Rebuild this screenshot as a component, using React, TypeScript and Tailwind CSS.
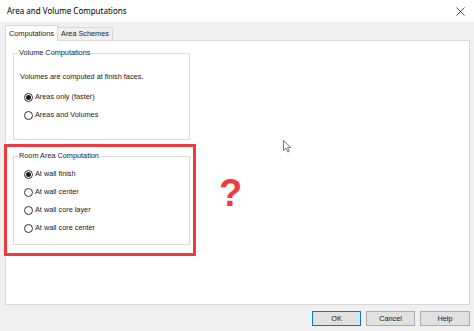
import React from "react";

function Radio({ label, checked }: { label: string; checked?: boolean }) {
  return (
    <div className="flex items-center h-[18px] pl-[10px]">
      <span className="w-[9px] h-[9px] rounded-full border border-[#333] bg-white flex items-center justify-center">
        {checked && <span className="w-[5px] h-[5px] rounded-full bg-[#1a1a1a]" />}
      </span>
      <span className="ml-[2px]">{label}</span>
    </div>
  );
}

export default function App() {
  return (
    <div className="w-[474px] h-[331px] bg-[#f0f0f0] flex flex-col overflow-hidden text-[#1a1a1a] font-['Liberation_Sans',Arial,sans-serif] text-[7.3px] leading-[10px]">
      {/* title bar */}
      <div className="h-[22px] bg-white flex items-center justify-between pl-[7px] pr-[9px]">
        <span className="font-['Noto_Sans',sans-serif] text-[8px] text-black">Area and Volume Computations</span>
        <svg width="9" height="9" viewBox="0 0 9 9" className="text-[#333]">
          <path d="M0.5 0.5 L8.5 8.5 M8.5 0.5 L0.5 8.5" stroke="currentColor" strokeWidth="0.9" />
        </svg>
      </div>

      <div className="flex-1 flex flex-col pl-[5px] pr-[4px] pt-[3px]">
        {/* tabs */}
        <div className="flex items-end h-[15px]">
          <div className="h-[16px] -mb-px z-10 bg-white border border-b-0 border-[#d9d9d9] px-[3px] flex items-center">
            Computations
          </div>
          <div className="h-[13px] bg-[#f0f0f0] border border-l-0 border-b-0 border-[#d9d9d9] px-[3px] flex items-center">
            Area Schemes
          </div>
        </div>

        {/* panel */}
        <div className="relative h-[265px] bg-white border border-[#d9d9d9] flex flex-col">
          <fieldset className="ml-[7px] mt-[7px] w-[177px] border border-[#dcdcdc] pb-[15px]">
            <legend className="ml-[4px] px-[1px]">Volume Computations</legend>
            <div className="pl-[6px] mt-[13px] h-[12px] flex items-center">Volumes are computed at finish faces.</div>
            <div className="mt-[5px]">
              <Radio label="Areas only (faster)" checked />
              <Radio label="Areas and Volumes" />
            </div>
          </fieldset>

          <div className="ml-[-2px] mt-[4px] w-[192px] border-[3px] border-[#ee3b41] pt-[4px] pb-[8px]">
            <fieldset className="ml-[6px] w-[177px] border border-[#dcdcdc] pb-[7px]">
              <legend className="ml-[4px] px-[1px]">Room Area Computation</legend>
              <div className="mt-[4px]">
                <Radio label="At wall finish" checked />
                <Radio label="At wall center" />
                <Radio label="At wall core layer" />
                <Radio label="At wall core center" />
              </div>
            </fieldset>
          </div>

          {/* annotation */}
          <span className="absolute left-[213px] top-[133px] font-['Liberation_Sans',Arial,sans-serif] font-bold text-[38px] leading-[38px] text-[#ee3b41]">
            ?
          </span>

          {/* mouse cursor */}
          <svg className="absolute left-[277px] top-[99px]" width="9" height="13" viewBox="0 0 9 13">
            <path d="M0.5 0.5 L0.5 10.5 L3 8.2 L4.8 12 L6.2 11.3 L4.5 7.6 L7.8 7.6 Z" fill="white" stroke="#555" strokeWidth="0.8" strokeLinejoin="round" />
          </svg>
        </div>

        {/* buttons */}
        <div className="flex justify-end gap-[5px] mt-[6px]">
          <button className="w-[49px] h-[15px] bg-[#e1e1e1] border border-[#0078d7] flex items-center justify-center">OK</button>
          <button className="w-[49px] h-[15px] bg-[#e1e1e1] border border-[#adadad] flex items-center justify-center">Cancel</button>
          <button className="w-[50px] h-[15px] bg-[#e1e1e1] border border-[#adadad] flex items-center justify-center">Help</button>
        </div>
      </div>
    </div>
  );
}
